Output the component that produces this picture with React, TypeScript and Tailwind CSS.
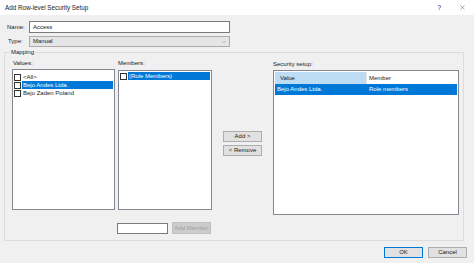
import { ChevronDown, X } from "lucide-react";

function Checkbox() {
  return <span className="inline-block w-[7px] h-[7px] shrink-0 border border-[#333333] bg-white" />;
}

function ListItem({ label, selected }: { label: string; selected?: boolean }) {
  return (
    <div className="flex items-center h-[8px] gap-[1px]">
      <Checkbox />
      <span
        className={
          selected
            ? "flex-1 h-[8px] leading-[8px] pl-[1px] bg-[#0078d7] text-white"
            : "flex-1 h-[8px] leading-[8px] pl-[1px]"
        }
      >
        {label}
      </span>
    </div>
  );
}

export default function App() {
  return (
    <div
      className="w-[474px] h-[263px] bg-[#f0f0f0] flex flex-col text-[6px] text-[#1a1a1a] overflow-hidden"
      style={{ fontFamily: '"Liberation Sans", Arial, sans-serif' }}
    >
      {/* Title bar */}
      <div className="h-[15px] bg-white flex items-center pl-[5px] pr-[8px]">
        <span className="text-[6.3px] flex-1">Add Row-level Security Setup</span>
        <span className="text-[6.5px] mr-[18px]">?</span>
        <X className="w-[7px] h-[7px]" strokeWidth={1.2} />
      </div>

      {/* Name / Type */}
      <div className="flex items-center mt-[6px] pl-[7px]">
        <span className="w-[22px]">Name:</span>
        <div className="w-[201px] h-[12px] bg-white border border-[#7a7a7a] flex items-center pl-[3px]">Access</div>
      </div>
      <div className="flex items-center mt-[3px] pl-[8px]">
        <span className="w-[21px]">Type:</span>
        <div className="w-[201px] h-[11px] bg-[#e5e5e5] border border-[#acacac] flex items-center pl-[3px] pr-[2px]">
          <span className="flex-1">Manual</span>
          <ChevronDown className="w-[6px] h-[6px] text-[#555]" strokeWidth={1.2} />
        </div>
      </div>

      {/* Mapping group */}
      <fieldset className="ml-[4px] mt-[1px] w-[460px] h-[193px] border border-[#dcdcdc]">
        <legend className="ml-[5px] px-[1px] leading-[9px]">Mapping</legend>
        <div className="flex pl-[7px] pt-[2px]">
          {/* Values */}
          <div className="flex flex-col w-[103px]">
            <span className="h-[10px] leading-[8px] pl-[1px]">Values:</span>
            <div className="h-[141px] bg-white border border-[#828790] pl-[1px] pt-[3px] pr-[1px]">
              <ListItem label="<All>" />
              <ListItem label="Bejo Andes Ltda." selected />
              <ListItem label="Bejo Zaden Poland" />
            </div>
          </div>

          {/* Members */}
          <div className="flex flex-col w-[94px] ml-[3px]">
            <span className="h-[11px] leading-[8px]">Members:</span>
            <div className="h-[140px] bg-white border border-[#828790] pl-[1px] pt-[1px] pr-[1px]">
              <ListItem label="(Role Members)" selected />
            </div>
            <div className="flex items-center mt-[12px] -ml-[1px]">
              <div className="w-[51px] h-[11px] bg-white border border-[#7a7a7a]" />
              <div className="ml-[4px] w-[39px] h-[12px] bg-[#cccccc] border border-[#bfbfbf] text-[#a0a0a0] flex items-center justify-center">
                Add Member
              </div>
            </div>
          </div>

          {/* Add / Remove */}
          <div className="flex flex-col w-[39px] ml-[11px] pt-[72px] gap-[3px]">
            <div className="h-[11px] bg-[#e1e1e1] border border-[#adadad] flex items-center justify-center">Add &gt;</div>
            <div className="h-[11px] bg-[#e1e1e1] border border-[#adadad] flex items-center justify-center">&lt; Remove</div>
          </div>

          {/* Security setup */}
          <div className="flex flex-col w-[186px] ml-[11px]">
            <span className="h-[11px] leading-[10px]">Security setup:</span>
            <div className="h-[145px] bg-white border border-[#828790] p-[1px]">
              <div className="flex h-[12px]">
                <div className="w-[92px] bg-[#bcdcf4] flex items-center pl-[5px] border-r border-[#e5e5e5]">Value</div>
                <div className="flex-1 flex items-center pl-[2px]">Member</div>
              </div>
              <div className="flex h-[11px] bg-[#0078d7] text-white">
                <div className="w-[92px] flex items-center pl-[2px]">Bejo Andes Ltda.</div>
                <div className="flex-1 flex items-center pl-[2px]">Role members</div>
              </div>
            </div>
          </div>
        </div>
      </fieldset>

      {/* Dialog buttons */}
      <div className="flex justify-end gap-[5px] mt-[6px] pr-[7px]">
        <div className="w-[39px] h-[11px] bg-[#e1e1e1] border border-[#0078d7] flex items-center justify-center">OK</div>
        <div className="w-[39px] h-[11px] bg-[#e1e1e1] border border-[#adadad] flex items-center justify-center">Cancel</div>
      </div>
    </div>
  );
}
